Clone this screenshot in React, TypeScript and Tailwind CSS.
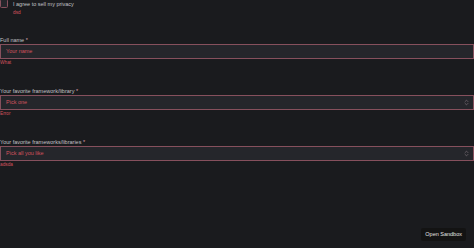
import { ChevronsUpDown } from 'lucide-react'

const font = { fontFamily: '"Liberation Sans", Arial, sans-serif' }

function Field({
  label,
  placeholder,
  error,
  select,
}: {
  label: string
  placeholder: string
  error: string
  select?: boolean
}) {
  return (
    <div className="flex flex-col">
      <label className="h-[8px] leading-[8px] text-[5.5px] text-[#c1c2c5]">
        {label} <span className="text-[#d9a3aa]">*</span>
      </label>
      <div className="flex h-[15px] items-center justify-between border border-[#86505d] bg-[#25262b] pl-[5px] pr-[3px]">
        <span className="text-[5.5px] text-[#d2525d]">{placeholder}</span>
        {select && <ChevronsUpDown size={7} strokeWidth={2} className="text-[#8a7c84]" />}
      </div>
      <p className="h-[8px] leading-[8px] text-[4.75px] text-[#d2525d]">{error}</p>
    </div>
  )
}

export default function App() {
  return (
    <div
      className="relative h-[248px] w-[474px] overflow-hidden bg-[#1a1b1e]"
      style={font}
    >
      <div className="flex flex-col gap-[20px]">
        {/* Checkbox */}
        <div className="flex flex-col">
          <div className="flex h-[8px] items-center gap-[5px]">
            <span className="-mt-[2px] h-[9px] w-[8px] rounded-[1.5px] border border-[#86505d] bg-[#25262b]" />
            <span className="text-[5.5px] text-[#c1c2c5]">I agree to sell my privacy</span>
          </div>
          <p className="ml-[13px] h-[10px] leading-[10px] text-[4.75px] text-[#d2525d]">dsd</p>
        </div>

        <div className="flex flex-col gap-[20px] -mt-[2px]">
          <Field label="Full name" placeholder="Your name" error="What" />
          <Field
            label="Your favorite framework/library"
            placeholder="Pick one"
            error="Error"
            select
          />
          <Field
            label="Your favorite frameworks/libraries"
            placeholder="Pick all you like"
            error="adsda"
            select
          />
        </div>
      </div>

      <button className="absolute bottom-[7px] right-[8px] flex h-[13px] items-center rounded-[2px] bg-[#131313] px-[4px] text-[5.5px] text-[#e5e5e5]">
        Open Sandbox
      </button>
    </div>
  )
}
